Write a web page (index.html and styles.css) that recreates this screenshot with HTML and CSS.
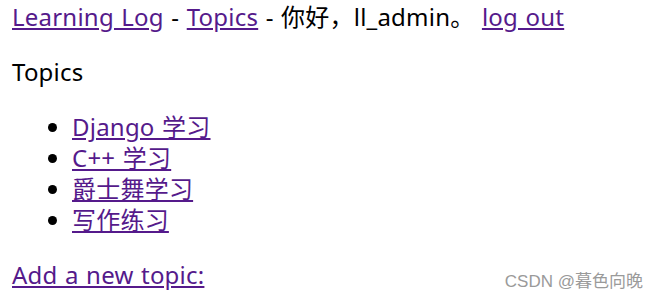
FILE: index.html
```html
<!DOCTYPE html>
<html>
<head>
<meta charset="utf-8">
<link rel="stylesheet" href="styles.css">
</head>
<body>
<p class="nav"><a href="#">Learning Log</a> - <a href="#">Topics</a> - 你好，ll_admin。 <a href="#">log out</a></p>
<p>Topics</p>
<ul>
<li><a href="#">Django 学习</a></li>
<li><a href="#">C++ 学习</a></li>
<li><a href="#">爵士舞学习</a></li>
<li><a href="#">写作练习</a></li>
</ul>
<p><a href="#">Add a new topic:</a></p>
<div class="watermark">CSDN @暮色向晚</div>
</body>
</html>
```
FILE: styles.css
```css
html, body {
  height: 100%;
}
body {
  margin: 0;
  padding: 1px 12px 0;
  box-sizing: border-box;
  font-family: "Noto Sans", "Noto Sans CJK SC", sans-serif;
  font-size: 24px;
  line-height: 31px;
  letter-spacing: 0.22px;
  word-spacing: 1px;
  color: #000;
  background: #fff;
  position: relative;
  overflow: hidden;
}
p {
  margin: 24px 0;
}
p.nav {
  margin-top: 0;
}
ul {
  margin: 24px 0;
  padding-left: 60px;
}
a {
  color: #551a8b;
}
.watermark {
  position: absolute;
  right: 16px;
  bottom: 8px;
  font-family: "Liberation Sans", "Noto Sans CJK SC", sans-serif;
  font-size: 17px;
  line-height: 20px;
  letter-spacing: 0;
  word-spacing: 0;
  color: #9a9a9a;
  text-shadow: 0 0 1px #fff;
}
```
